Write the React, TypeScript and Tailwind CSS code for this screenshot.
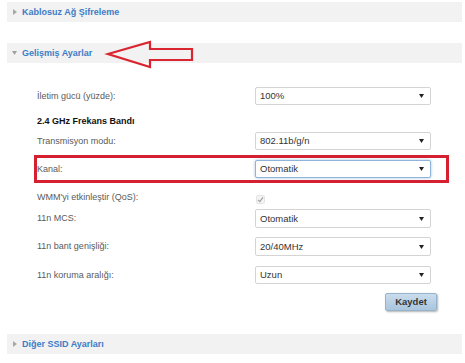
import React from "react";

function Sel({ value, focus = false }: { value: string; focus?: boolean }) {
  return (
    <div
      className={
        "w-[176px] h-full flex items-center justify-between pl-[4px] pr-[6px] bg-white rounded-[2px] text-[9.5px] text-[#333] " +
        (focus
          ? "border border-[#8fb3d9] shadow-[0_0_3px_rgba(102,153,204,0.6)]"
          : "border border-[#d4d4d4]")
      }
    >
      <span>{value}</span>
      <svg width="5" height="4" viewBox="0 0 5 4">
        <polygon points="0,0 5,0 2.5,4" fill="#222" />
      </svg>
    </div>
  );
}

function Row({
  label,
  h,
  mt,
  children,
}: {
  label: string;
  h: string;
  mt: string;
  children?: React.ReactNode;
}) {
  return (
    <div className={"flex items-center ml-[37px] " + h + " " + mt}>
      <div className="w-[218px] text-[#5a5a5a]">{label}</div>
      {children}
    </div>
  );
}

function Bar({ label, open, mt }: { label: string; open?: boolean; mt: string }) {
  return (
    <div
      className={
        "ml-[7px] w-[455px] h-[20px] bg-[#f2f2f2] flex items-center font-bold text-[#3e7cc6] " + mt
      }
    >
      <span className="w-[15px] flex justify-end pr-[5px]">
        {open ? (
          <svg width="5" height="4" viewBox="0 0 5 4">
            <polygon points="0,0 5,0 2.5,4" fill="#a0a0a0" />
          </svg>
        ) : (
          <svg width="4" height="6" viewBox="0 0 4 6">
            <polygon points="0,0 4,3 0,6" fill="#a8a8a8" />
          </svg>
        )}
      </span>
      <span>{label}</span>
    </div>
  );
}

export default function App() {
  return (
    <div className="w-[465px] h-[363px] bg-white relative overflow-hidden font-['Liberation_Sans',Arial,sans-serif] text-[9px] leading-none">
      <Bar label="Kablosuz Ağ Şifreleme" mt="mt-[2px]" />
      <Bar label="Gelişmiş Ayarlar" open mt="mt-[21px]" />

      <Row label="İletim gücü (yüzde):" h="h-[18px]" mt="mt-[24px]">
        <Sel value="100%" />
      </Row>
      <div className="ml-[37px] h-[16px] mt-[8px] flex items-center font-bold text-[#111]">
        2.4 GHz Frekans Bandı
      </div>
      <Row label="Transmisyon modu:" h="h-[18px]" mt="mt-[3px]">
        <Sel value="802.11b/g/n" />
      </Row>
      <div className="ml-[34px] w-[415px] h-[28px] mt-[5px] border-[3px] border-[#d42030] flex items-center">
        <div className="flex items-center h-[18px]">
          <div className="w-[218px] text-[#5a5a5a]">Kanal:</div>
          <Sel value="Otomatik" focus />
        </div>
      </div>
      <Row label="WMM'yi etkinleştir (QoS):" h="h-[14px]" mt="mt-[7px]">
        <div className="pt-[5px] pl-[1px]">
          <svg width="9" height="9" viewBox="0 0 9 9">
            <rect x="0.5" y="0.5" width="8" height="8" rx="1" fill="#f4f4f4" stroke="#e4e4e4" />
            <polyline points="2,4.8 3.8,6.6 7,2.4" fill="none" stroke="#a0a0a0" strokeWidth="1.2" />
          </svg>
        </div>
      </Row>
      <Row label="11n MCS:" h="h-[19px]" mt="mt-[5px]">
        <Sel value="Otomatik" />
      </Row>
      <Row label="11n bant genişliği:" h="h-[19px]" mt="mt-[9px]">
        <Sel value="20/40MHz" />
      </Row>
      <Row label="11n koruma aralığı:" h="h-[18px]" mt="mt-[10px]">
        <Sel value="Uzun" />
      </Row>
      <div className="flex justify-end w-[437px] mt-[9px]">
        <button className="w-[52px] h-[18px] rounded-[2px] bg-gradient-to-b from-[#c9dcec] to-[#aac5dd] border border-[#97b2cb] shadow-[1px_1px_2px_rgba(0,0,0,0.3)] font-bold text-[#333] text-[9.5px]">
          Kaydet
        </button>
      </div>
      <Bar label="Diğer SSID Ayarları" mt="mt-[23px]" />

      <svg
        className="absolute left-0 top-0 pointer-events-none"
        width="465"
        height="363"
        viewBox="0 0 465 363"
      >
        <polygon
          points="108,54 150,42 150,49 192,49 192,60 150,60 150,67"
          fill="none"
          stroke="#d9252f"
          strokeWidth="2.2"
          strokeLinejoin="miter"
        />
      </svg>
    </div>
  );
}
